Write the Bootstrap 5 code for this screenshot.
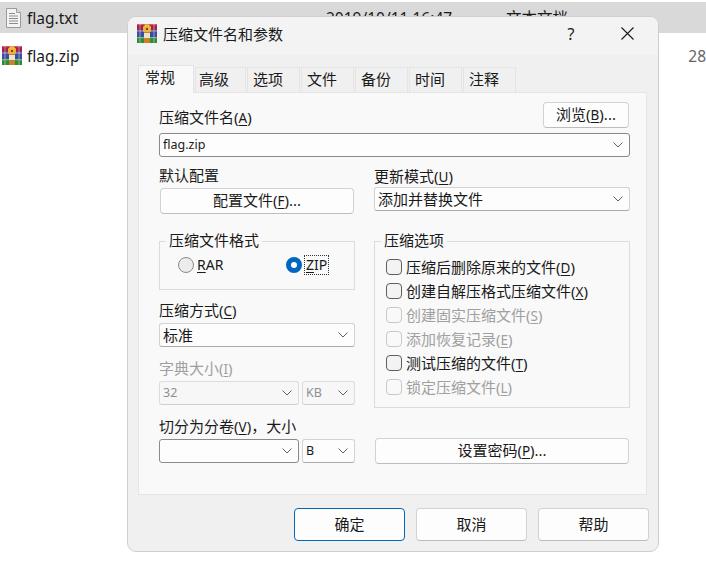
<!DOCTYPE html>
<html lang="zh">
<head>
<meta charset="utf-8">
<title>压缩文件名和参数</title>
<link href="https://cdn.jsdelivr.net/npm/bootstrap@5.3.0/dist/css/bootstrap.min.css" rel="stylesheet">
<style>
html,body{margin:0;background:#fff;overflow:hidden}
body{width:706px;height:569px;position:relative;font-family:"Noto Sans","Noto Sans CJK SC",sans-serif;font-size:15px;line-height:20px;color:#1a1a1a}
u{text-underline-offset:2px;font-size:13.5px}
.file-row{height:31px;padding-left:2px}
.file-row.sel{margin-top:2px;background:#d9d9d9}
.file-row.plain{margin-top:7px}
.file-name{font-size:15.5px;margin-left:5px;width:299px;flex:none}
.file-date{font-size:15.5px;width:180px;flex:none}
.file-kind{font-size:15.5px;flex:none}
.fname-gray{color:#666;font-size:15.5px;width:auto}
.icon-slot{width:20px;flex:none;padding-right:1px}
.dlg{position:absolute;left:127px;top:16px;width:532px;height:536px;border:1px solid #cfcfcf;border-radius:9px;background:#f0f0f0;overflow:hidden}
.dlg-title{height:38px;background:#f3f3f3;padding:0 0 5px 9px}
.dlg-title .ttl{margin-left:6px;font-size:15px;line-height:18px}
.dlg-q{margin-left:auto;width:20px;margin-right:40px;text-align:center;font-size:16px}
.dlg-x{margin-right:24px}
.tabs-bar{margin:10px 0 0 10px;height:27px;border:0;gap:1px;flex-wrap:nowrap;align-items:flex-end}
.tabs-bar .nav-link{border:1px solid #e4e4e4;border-bottom:0;border-radius:0;margin:0;height:25px;width:53px;padding:0 0 0 5px;text-align:left;color:#1a1a1a;background:#f0f0f0;font-size:15px;line-height:22px}
.tabs-bar .nav-item:nth-child(2) .nav-link{width:51px;padding-left:3px}
.tabs-bar .nav-link.active{height:28px;width:56px;background:#f9f9f9;color:#1a1a1a;border-color:#e4e4e4;position:relative;top:1px;padding:0 0 0 6px}
.pane{margin-left:10px;width:509px;height:403px;background:#f9f9f9;border:1px solid #e5e5e5;padding:9px 16px 0 20px}
.lbl{height:20px;line-height:18px}
.off{color:#a0a0a0}
.btn-win{background:#fdfdfd;border:1px solid #d2d2d2;border-bottom-color:#bcbcbc;border-radius:4px;color:#1a1a1a;font-size:15px;line-height:20px;padding:0 0 2px;--bs-btn-hover-bg:#fdfdfd}
.btn-browse{width:86px;height:26px;margin-right:1px}
.row-top{height:26px}
.cbo.form-select{height:24px;font-size:15px;line-height:20px;padding:0 22px 0 3px;border:1px solid #d2d2d2;border-bottom-color:#ababab;border-radius:3px;background-color:#fdfdfd;color:#1a1a1a;background-size:10px 6px;background-position:right 6px center;background-image:url("data:image/svg+xml,%3Csvg xmlns='http://www.w3.org/2000/svg' viewBox='0 0 10 6'%3E%3Cpath d='M.5.5 5 5 9.5.5' fill='none' stroke='%23606060'/%3E%3C/svg%3E")}
.cbo.cbo-lat.form-select{font-size:12.5px}
.cbo.dark.form-select{border-color:#8a8a8a}
.cbo.form-select:disabled{background-color:#f7f7f7;color:#8f8f8f;border-color:#dcdcdc;border-bottom-color:#d0d0d0}
.cbo-name{margin-top:5px;width:471px}
.col-l{width:196px;flex:none}
.col-r{width:256px;margin-left:19px;flex:none}
.m9{margin-top:9px}.m10{margin-top:10px}.m2{margin-top:2px}.m12{margin-top:12px}
.btn-cfg{width:194px;height:26px;margin:2px 1px 0}
.grp{border:1px solid #dcdcdc;background:#f9f9f9}
.grp-t{display:block;width:fit-content;margin-top:-11px;margin-left:6px;padding:0 3px;background:#f9f9f9;height:20px;line-height:18px}
.grp-fmt{height:49px;margin-top:27px}
.fmt-row{padding-top:4px}
.fmt-item{position:relative;font-size:14px}
.fmt-item u{font-size:14px}
.fmt-rar{margin-left:18px;width:108px}
.radio-x.form-check-input{width:16px;height:16px;margin:0;border:1px solid #8a8a8a;background:#ececec;flex:none}
.radio-x.form-check-input:checked{background:#fff;border:5px solid #0067c0}
.zip-lab{outline:1px dotted #333;outline-offset:0;margin-left:3px;padding:0 1px;line-height:18px}
.rar-lab{margin-left:3px}
.m11{margin-top:11px}
.w-main{width:140px}
.w-unit{width:53px;margin-left:3px}
.grp-opt{margin-top:30px;height:167px}
.opt-rows{margin-top:4px;padding-left:11px}
.opt-rows .opt{height:24px;font-size:15px;line-height:18px}
.chk-x.form-check-input{width:16px;height:16px;margin:0 4px 0 0;border:1px solid #5f5f5f;border-radius:4px;background:#f3f3f3;flex:none}
.chk-x.form-check-input:disabled{opacity:1;border-color:#c8c8c8;background:#f9f9f9}
.form-check-input:disabled~.off{opacity:1}
.btn-pass{width:254px;height:26px;margin:30px 0 0 1px}
.dlg-foot{padding:13px 9px 0 0;gap:11px;justify-content:flex-end}
.btn-foot{width:111px;height:33px}
.btn-def{border:1px solid #0067c0}
</style>
</head>
<body>
<svg width="0" height="0" class="d-block position-absolute">
<defs>
<symbol id="rar" viewBox="0 0 20 19">
<rect x="0" y="0" width="20" height="6.5" fill="#a31f47"/>
<rect x="0" y="0" width="20" height="1.2" fill="#d65a72"/>
<rect x="0" y="6.5" width="20" height="6.5" fill="#3e4aa6"/>
<rect x="0" y="6.5" width="20" height="1.2" fill="#7d86d2"/>
<rect x="0" y="13" width="20" height="6" fill="#2f8a3a"/>
<rect x="0" y="13" width="20" height="1.2" fill="#6cc070"/>
<rect x="7" y="0" width="6" height="19" fill="#c9822a"/>
<rect x="6" y="2" width="8" height="6" rx="1" fill="#eeb13c"/>
<rect x="7" y="9" width="6" height="5" fill="#e9e4d2"/>
<path d="M8.5 2.500V1h3v1.500" fill="none" stroke="#f6d27a"/>
<rect x="9" y="4" width="2" height="2" fill="#7a4a12"/>
<rect x="2.500" y="0" width="1" height="19" fill="#e8e0c8" opacity=".55"/>
<rect x="16.500" y="0" width="1" height="19" fill="#e8e0c8" opacity=".55"/>
</symbol>
</defs>
</svg>

<div class="file-row sel d-flex align-items-center">
  <div class="icon-slot d-flex justify-content-end">
    <svg width="15" height="20" viewBox="0 0 15 20"><path d="M.5.5h10l4 4v15H.5z" fill="#f4f4f4" stroke="#9a9a9a"/><path d="M10.500.5v4h4" fill="#e2e2e2" stroke="#9a9a9a"/><path d="M3 5.500h6M3 8h9M3 10.500h9M3 13h9M3 15.500h9" stroke="#8c8c8c"/></svg>
  </div>
  <span class="file-name">flag.txt</span>
  <span class="file-date">2019/10/11 16:47</span>
  <span class="file-kind">文本文档</span>
</div>
<div class="file-row plain d-flex align-items-center">
  <svg class="icon-slot p-0" width="20" height="19"><use href="#rar"/></svg>
  <span class="file-name">flag.zip</span>
  <span class="flex-grow-1"></span>
  <span class="fname-gray">28</span>
</div>

<div class="dlg">
  <div class="dlg-title d-flex align-items-center">
    <svg width="20" height="19"><use href="#rar"/></svg>
    <span class="ttl">压缩文件名和参数</span>
    <span class="dlg-q">?</span>
    <svg class="dlg-x" width="13" height="13" viewBox="0 0 13 13"><path d="M.5.5l12 12M12.500.5l-12 12" stroke="#1a1a1a" stroke-width="1.100"/></svg>
  </div>
  <ul class="nav nav-tabs tabs-bar">
    <li class="nav-item"><a class="nav-link active" href="#">常规</a></li>
    <li class="nav-item"><a class="nav-link" href="#">高级</a></li>
    <li class="nav-item"><a class="nav-link" href="#">选项</a></li>
    <li class="nav-item"><a class="nav-link" href="#">文件</a></li>
    <li class="nav-item"><a class="nav-link" href="#">备份</a></li>
    <li class="nav-item"><a class="nav-link" href="#">时间</a></li>
    <li class="nav-item"><a class="nav-link" href="#">注释</a></li>
  </ul>
  <div class="pane">
    <div class="row-top d-flex justify-content-between align-items-end">
      <span class="lbl">压缩文件名(<u>A</u>)</span>
      <button type="button" class="btn btn-win btn-browse">浏览(<u>B</u>)...</button>
    </div>
    <select class="form-select cbo cbo-lat dark cbo-name"><option>flag.zip</option></select>
    <div class="d-flex">
      <div class="col-l">
        <div class="lbl m9">默认配置</div>
        <button type="button" class="btn btn-win btn-cfg d-block">配置文件(<u>F</u>)...</button>
        <div class="grp grp-fmt">
          <span class="grp-t">压缩文件格式</span>
          <div class="d-flex fmt-row">
            <label class="fmt-item fmt-rar d-flex align-items-center"><input class="form-check-input radio-x" type="radio" name="fmt"><span class="rar-lab"><u>R</u>AR</span></label>
            <label class="fmt-item d-flex align-items-center"><input class="form-check-input radio-x" type="radio" name="fmt" checked><span class="zip-lab"><u>Z</u>IP</span></label>
          </div>
        </div>
        <div class="lbl m11">压缩方式(<u>C</u>)</div>
        <select class="form-select cbo m2"><option>标准</option></select>
        <div class="lbl m12 off">字典大小(<u>I</u>)</div>
        <div class="d-flex m2">
          <select class="form-select cbo cbo-lat w-main" disabled><option>32</option></select>
          <select class="form-select cbo cbo-lat w-unit" disabled><option>KB</option></select>
        </div>
        <div class="lbl m12">切分为分卷(<u>V</u>)，大小</div>
        <div class="d-flex m2">
          <select class="form-select cbo dark w-main"><option></option></select>
          <select class="form-select cbo cbo-lat w-unit"><option>B</option></select>
        </div>
      </div>
      <div class="col-r">
        <div class="lbl m10">更新模式(<u>U</u>)</div>
        <select class="form-select cbo"><option>添加并替换文件</option></select>
        <div class="grp grp-opt">
          <span class="grp-t">压缩选项</span>
          <div class="opt-rows">
            <label class="opt d-flex align-items-center"><input class="form-check-input chk-x" type="checkbox"><span>压缩后删除原来的文件(<u>D</u>)</span></label>
            <label class="opt d-flex align-items-center"><input class="form-check-input chk-x" type="checkbox"><span>创建自解压格式压缩文件(<u>X</u>)</span></label>
            <label class="opt d-flex align-items-center"><input class="form-check-input chk-x" type="checkbox" disabled><span class="off">创建固实压缩文件(<u>S</u>)</span></label>
            <label class="opt d-flex align-items-center"><input class="form-check-input chk-x" type="checkbox" disabled><span class="off">添加恢复记录(<u>E</u>)</span></label>
            <label class="opt d-flex align-items-center"><input class="form-check-input chk-x" type="checkbox"><span>测试压缩的文件(<u>T</u>)</span></label>
            <label class="opt d-flex align-items-center"><input class="form-check-input chk-x" type="checkbox" disabled><span class="off">锁定压缩文件(<u>L</u>)</span></label>
          </div>
        </div>
        <button type="button" class="btn btn-win btn-pass d-block">设置密码(<u>P</u>)...</button>
      </div>
    </div>
  </div>
  <div class="d-flex dlg-foot">
    <button type="button" class="btn btn-win btn-foot btn-def">确定</button>
    <button type="button" class="btn btn-win btn-foot">取消</button>
    <button type="button" class="btn btn-win btn-foot">帮助</button>
  </div>
</div>
<script src="https://cdn.jsdelivr.net/npm/bootstrap@5.3.0/dist/js/bootstrap.bundle.min.js"></script>
</body>
</html>
